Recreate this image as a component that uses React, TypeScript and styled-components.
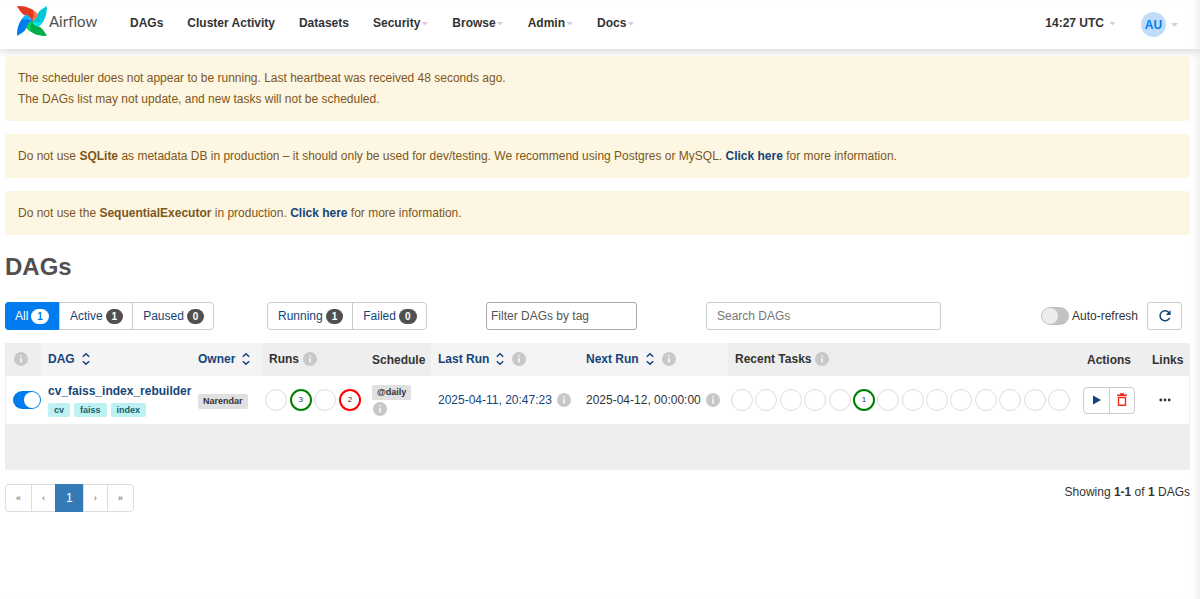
import React from "react";
import styled, { createGlobalStyle, css } from "styled-components";

const GlobalStyle = createGlobalStyle`
  *, *::before, *::after { box-sizing: border-box; }
  body {
    margin: 0;
    background: #fff;
    color: #333;
    font: 12px/18px "Liberation Sans", Arial, Helvetica, sans-serif;
  }
  button, input { font: inherit; }
  a { color: #14457a; text-decoration: none; }
`;

const Page = styled.div`
  min-height: 100vh;
  box-shadow: inset -8px 0 8px -6px rgba(0, 0, 0, 0.08);
`;

/* Navigation */

const NavBar = styled.header`
  display: flex;
  align-items: center;
  height: 49px;
  padding: 0 22px 0 16px;
  box-shadow: 0 1px 10px rgba(0, 0, 0, 0.2);
`;

const Brand = styled.a`
  display: flex;
  align-items: center;
  gap: 1px;
  width: 114px;
  height: 49px;
  padding-bottom: 7px;
  color: #51504f;
  font: 15px/18px Lato, sans-serif;
`;

const NavLinks = styled.nav`
  display: flex;
  flex: 1;
  gap: 24px;
  padding-bottom: 3px;
`;

const NavEnd = styled.div`
  display: flex;
  align-items: center;
  gap: 25px;
`;

const NavItem = styled.a`
  display: flex;
  align-items: center;
  color: #333;
  font-weight: bold;
`;

const MenuButton = styled.button<{ $gap?: number; $raised?: boolean }>`
  display: flex;
  align-items: center;
  gap: ${(p) => p.$gap ?? 1}px;
  padding: 0 0 ${(p) => (p.$raised ? 3 : 0)}px;
  border: 0;
  background: none;
  color: #333;
  font-weight: bold;
`;

const Caret = styled.span`
  width: 7px;
  height: 4px;
  margin-top: 1px;
  background: #dcc6e0;
  clip-path: polygon(0 0, 100% 0, 50% 100%);
`;

const Avatar = styled.span`
  display: grid;
  place-items: center;
  width: 25px;
  height: 25px;
  border-radius: 50%;
  background: #bfddfb;
  color: #017cee;
`;

/* Alerts */

const Main = styled.main`
  padding: 7px 10px 0 5px;
`;

const Alerts = styled.div`
  display: grid;
  gap: 13px;
`;

const Alert = styled.div`
  display: grid;
  gap: 3px;
  padding: 13px;
  border-radius: 3px;
  background: #fdf6e2;
  color: #7c5720;
  p { margin: 0; }
  a { font-weight: bold; }
`;

const Title = styled.h1`
  margin: 17px 0 20px;
  color: #51504f;
  font-size: 24px;
  line-height: 30px;
  font-weight: bold;
`;

/* Filters */

const Filters = styled.div`
  display: grid;
  grid-template-columns: 262fr 219fr 220fr 484fr;
  align-items: center;
  margin-bottom: 13px;
`;

const ButtonGroup = styled.div`
  display: inline-flex;
  justify-self: start;
  border: 1px solid #ccc;
  border-radius: 4px;
  && > * + * { border-left: 1px solid #ccc; }
`;

const FilterLink = styled.a<{ $active?: boolean }>`
  display: flex;
  align-items: center;
  gap: 3px;
  height: 26px;
  padding: 0 9px 0 10px;
  color: #14457a;
  ${(p) =>
    p.$active &&
    css`
      margin: -1px 0 -1px -1px;
      height: 28px;
      padding: 0 10px;
      border-radius: 4px 0 0 4px;
      background: #017cee;
      color: #fff;
    `}
`;

const Count = styled.span<{ $active?: boolean }>`
  padding: 0 6px;
  border-radius: 8px;
  background: ${(p) => (p.$active ? "#fff" : "#51504f")};
  color: ${(p) => (p.$active ? "#017cee" : "#fff")};
  font-size: 10px;
  line-height: 15px;
  font-weight: bold;
`;

const TextInput = styled.input<{ $wide?: boolean }>`
  width: ${(p) => (p.$wide ? 235 : 151)}px;
  height: 28px;
  padding: 0 ${(p) => (p.$wide ? 10 : 4)}px;
  border: 1px solid ${(p) => (p.$wide ? "#ccc" : "#aaa")};
  border-radius: 3px;
  background: #fff;
  &::placeholder {
    color: ${(p) => (p.$wide ? "#777" : "#555")};
    opacity: 1;
  }
`;

const SearchArea = styled.div`
  display: flex;
  align-items: center;
  justify-content: space-between;
  padding-right: 8px;
`;

const RefreshArea = styled.div`
  display: flex;
  align-items: center;
  gap: 9px;
`;

const SwitchLabel = styled.label`
  display: flex;
  align-items: center;
  gap: 3px;
`;

const Switch = styled.input`
  appearance: none;
  display: block;
  width: 28px;
  height: 18px;
  margin: 0;
  padding: 1px;
  border-radius: 9px;
  background: #c4c2c1;
  &::before {
    content: "";
    display: block;
    width: 16px;
    height: 16px;
    border-radius: 50%;
    background: #edecec;
  }
  &:checked { background: #017cee; }
  &:checked::before { margin-left: 10px; background: #fff; }
`;

const IconButton = styled.button<{ $wide?: boolean }>`
  display: grid;
  place-items: center;
  width: ${(p) => (p.$wide ? 35 : 25)}px;
  height: ${(p) => (p.$wide ? 28 : 25)}px;
  padding: 0;
  border: ${(p) => (p.$wide ? "1px solid #ccc" : "0")};
  border-radius: ${(p) => (p.$wide ? 3 : 0)}px;
  background: none;
`;

/* Table */

const TableWrap = styled.div`
  padding-bottom: 46px;
  border-radius: 3px 3px 0 0;
  background: #eee;
`;

const Table = styled.table`
  width: 100%;
  table-layout: fixed;
  border-collapse: separate;
  border-spacing: 0;
`;

const Th = styled.th<{ $sort?: boolean }>`
  height: 33px;
  padding: 0 0 0 7px;
  background: ${(p) => (p.$sort ? "#f4f4f4" : "#eee")};
  text-align: left;
  font-weight: bold;
  white-space: nowrap;
  &:first-child { padding-left: 9px; }
`;

const HeadLabel = styled.span`
  display: flex;
  align-items: center;
  gap: 4px;
  padding-bottom: 2px;
`;

const SortLink = styled.a`
  display: flex;
  align-items: center;
  gap: 6px;
  margin-right: 3px;
`;

const Td = styled.td<{ $tight?: boolean }>`
  height: 48px;
  padding: 0 0 0 ${(p) => (p.$tight ? 3 : 7)}px;
  background: #fff;
  white-space: nowrap;
  &:first-child { border-left: 1px solid #eee; }
  &:last-child { border-right: 1px solid #eee; }
`;

const DagLink = styled.a`
  display: block;
  line-height: 15px;
  font-weight: bold;
`;

const Tags = styled.div`
  display: flex;
  gap: 4px;
  margin-top: 4px;
`;

const Tag = styled.a`
  padding: 0 6px;
  border-radius: 2px;
  background: #bdf1f2;
  color: #1b5f66;
  font-size: 9px;
  line-height: 14px;
  font-weight: bold;
`;

const Label = styled.span`
  display: inline-block;
  padding: 0 5px;
  border-radius: 2px;
  background: #e0e0e0;
  color: #333;
  font-size: 9px;
  line-height: 15px;
  font-weight: bold;
`;

const ScheduleCell = styled.div`
  display: grid;
  justify-items: start;
  gap: 2px;
`;

const ScheduleInfo = styled.span`
  padding-left: 1px;
  line-height: 0;
`;

const Circles = styled.div<{ $end: number }>`
  display: flex;
  justify-content: space-between;
  padding-right: ${(p) => p.$end}px;
`;

const Circle = styled.span<{ $color?: string }>`
  display: grid;
  place-items: center;
  width: 22px;
  height: 22px;
  border: ${(p) => (p.$color ? `2px solid ${p.$color}` : "1px solid #ddd")};
  border-radius: 50%;
  font-size: 8px;
  line-height: 10px;
`;

const WithInfo = styled.span`
  display: flex;
  align-items: center;
  gap: 5px;
`;

/* Footer */

const Footer = styled.div`
  display: flex;
  justify-content: space-between;
  align-items: flex-start;
  margin-top: 14px;
`;

const Pager = styled.nav`
  display: flex;
  border: 1px solid #ddd;
  border-radius: 4px;
`;

const PageLink = styled.a<{ $active?: boolean }>`
  display: grid;
  place-items: center;
  min-width: 24px;
  height: 26px;
  padding: 0 10px;
  color: #555;
  font-size: 9px;
  & + & { border-left: 1px solid #ddd; }
  ${(p) =>
    p.$active &&
    css`
      && {
        height: 28px;
        margin: -1px 0;
        border-color: #337ab7;
        background: #337ab7;
        color: #fff;
        font-size: 12px;
      }
    `}
`;

const Summary = styled.div`
  line-height: 17px;
`;

/* Drawings */

const blades = [
  { turn: 0, main: "#e43921", fold: "#ff7557" },
  { turn: 90, main: "#00c7d4", fold: "#11e1ee" },
  { turn: 180, main: "#00ad46", fold: "#04d659" },
  { turn: 270, main: "#017cee", fold: "#0cb6ff" },
];

const Pinwheel = () => (
  <svg width="32" height="32" viewBox="-16 -16 32 32" aria-hidden="true">
    {blades.map((b) => (
      <g key={b.turn} transform={`rotate(${b.turn})`}>
        <path d="M-15 -14.800C-7 -15.500 1 -12.500 5.800 -6.500L0 0C-1.500 -3 -3.500 -5.500 -7 -5.800C-10 -6.500 -12.500 -11 -15 -14.800Z" fill={b.main} />
        <path d="M0 0C2 -4 2.200 -7.500 0.800 -10.800C3 -9.800 5 -8 6.500 -5.800C6.500 -4 3.500 -2 0 0Z" fill={b.fold} />
      </g>
    ))}
    <circle r="0.800" fill="#51504f" />
  </svg>
);

const Info = () => (
  <svg width="14" height="14" viewBox="0 0 14 14" role="img" aria-label="Info">
    <circle cx="7" cy="7" r="7" fill="#c8c8c8" />
    <path d="M6.300 3.300h1.400v1.400H6.300zM6.300 6h1.400v4.500H6.300z" fill="#fff" />
  </svg>
);

const SortIcon = () => (
  <svg width="10" height="14" viewBox="0 0 10 14" fill="none" stroke="#14457a" strokeWidth="1.500" aria-hidden="true">
    <path d="M1.800 4.800L5 1.700L8.200 4.800M1.800 9.200L5 12.300L8.200 9.200" />
  </svg>
);

const RefreshIcon = () => (
  <svg width="14" height="14" viewBox="0 0 14 14" aria-hidden="true">
    <path d="M11.200 4A5 5 0 1 0 11.700 8.700" fill="none" stroke="#14457a" strokeWidth="1.500" />
    <path d="M12.600 1.200V6H7.800Z" fill="#14457a" />
  </svg>
);

const PlayIcon = () => (
  <svg width="10" height="10" viewBox="0 0 10 10" aria-hidden="true">
    <path d="M1 0.500V9.500L9 5Z" fill="#14457a" />
  </svg>
);

const TrashIcon = () => (
  <svg width="12" height="14" viewBox="0 0 12 14" fill="none" stroke="#ee2b1c" strokeWidth="1.400" aria-hidden="true">
    <path d="M1 2.200H11M4 1H8M2.500 4.500H9.500V12.300H2.500Z" />
  </svg>
);

const DotsIcon = () => (
  <svg width="12" height="4" viewBox="0 0 12 4" fill="#333" aria-hidden="true">
    <circle cx="1.800" cy="2" r="1.400" />
    <circle cx="6" cy="2" r="1.400" />
    <circle cx="10.200" cy="2" r="1.400" />
  </svg>
);

/* Page */

type State = { value?: number; color?: string };

const runs: State[] = [{}, { value: 3, color: "green" }, {}, { value: 2, color: "red" }];

const tasks: State[] = Array.from({ length: 14 }, (_, i) =>
  i === 5 ? { value: 1, color: "green" } : {}
);

const StateCircles = ({ items, end }: { items: State[]; end: number }) => (
  <Circles $end={end}>
    {items.map((item, i) => (
      <Circle key={i} $color={item.color}>
        {item.value}
      </Circle>
    ))}
  </Circles>
);

const Sortable = ({ text, info }: { text: string; info?: boolean }) => (
  <Th $sort>
    <HeadLabel>
      <SortLink href="#">
        {text}
        <SortIcon />
      </SortLink>
      {info && <Info />}
    </HeadLabel>
  </Th>
);

const Filter = ({ text, count, active }: { text: string; count: number; active?: boolean }) => (
  <FilterLink href="#" $active={active}>
    {text}
    <Count $active={active}>{count}</Count>
  </FilterLink>
);

export default function App() {
  return (
    <Page>
      <GlobalStyle />
      <NavBar>
        <Brand href="#">
          <Pinwheel />
          Airflow
        </Brand>
        <NavLinks>
          {["DAGs", "Cluster Activity", "Datasets"].map((t) => (
            <NavItem key={t} href="#">
              {t}
            </NavItem>
          ))}
          {["Security", "Browse", "Admin", "Docs"].map((t) => (
            <MenuButton key={t}>
              {t}
              <Caret />
            </MenuButton>
          ))}
        </NavLinks>
        <NavEnd>
          <MenuButton $gap={5} $raised>
            14:27 UTC
            <Caret />
          </MenuButton>
          <MenuButton $gap={5}>
            <Avatar>AU</Avatar>
            <Caret />
          </MenuButton>
        </NavEnd>
      </NavBar>
      <Main>
        <Alerts>
          <Alert>
            <p>The scheduler does not appear to be running. Last heartbeat was received 48 seconds ago.</p>
            <p>The DAGs list may not update, and new tasks will not be scheduled.</p>
          </Alert>
          <Alert>
            <p>
              Do not use <b>SQLite</b> as metadata DB in production – it should only be used for dev/testing. We
              recommend using Postgres or MySQL. <a href="#">Click here</a> for more information.
            </p>
          </Alert>
          <Alert>
            <p>
              Do not use the <b>SequentialExecutor</b> in production. <a href="#">Click here</a> for more
              information.
            </p>
          </Alert>
        </Alerts>
        <Title>DAGs</Title>
        <Filters>
          <ButtonGroup>
            <Filter text="All" count={1} active />
            <Filter text="Active" count={1} />
            <Filter text="Paused" count={0} />
          </ButtonGroup>
          <ButtonGroup>
            <Filter text="Running" count={1} />
            <Filter text="Failed" count={0} />
          </ButtonGroup>
          <TextInput aria-label="Filter DAGs by tag" placeholder="Filter DAGs by tag" />
          <SearchArea>
            <TextInput $wide type="search" aria-label="Search DAGs" placeholder="Search DAGs" />
            <RefreshArea>
              <SwitchLabel>
                <Switch type="checkbox" role="switch" />
                Auto-refresh
              </SwitchLabel>
              <IconButton $wide aria-label="Refresh">
                <RefreshIcon />
              </IconButton>
            </RefreshArea>
          </SearchArea>
        </Filters>
        <TableWrap>
          <Table>
            <colgroup>
              <col style={{ width: 36 }} />
              <col style={{ width: 150 }} />
              <col style={{ width: 71 }} />
              <col style={{ width: 103 }} />
              <col style={{ width: 66 }} />
              <col style={{ width: 148 }} />
              <col style={{ width: 149 }} />
              <col />
              <col style={{ width: 65 }} />
              <col style={{ width: 45 }} />
            </colgroup>
            <thead>
              <tr>
                <Th>
                  <HeadLabel>
                    <Info />
                  </HeadLabel>
                </Th>
                <Sortable text="DAG" />
                <Sortable text="Owner" />
                <Th>
                  <HeadLabel>
                    Runs <Info />
                  </HeadLabel>
                </Th>
                <Th>Schedule</Th>
                <Sortable text="Last Run" info />
                <Sortable text="Next Run" info />
                <Th>
                  <HeadLabel>
                    Recent Tasks <Info />
                  </HeadLabel>
                </Th>
                <Th>Actions</Th>
                <Th>Links</Th>
              </tr>
            </thead>
            <tbody>
              <tr>
                <Td>
                  <Switch type="checkbox" role="switch" defaultChecked aria-label="Pause/Unpause DAG" />
                </Td>
                <Td>
                  <DagLink href="#">cv_faiss_index_rebuilder</DagLink>
                  <Tags>
                    <Tag href="#">cv</Tag>
                    <Tag href="#">faiss</Tag>
                    <Tag href="#">index</Tag>
                  </Tags>
                </Td>
                <Td>
                  <Label>Narendar</Label>
                </Td>
                <Td $tight>
                  <StateCircles items={runs} end={4} />
                </Td>
                <Td>
                  <ScheduleCell>
                    <Label>@daily</Label>
                    <ScheduleInfo>
                      <Info />
                    </ScheduleInfo>
                  </ScheduleCell>
                </Td>
                <Td>
                  <WithInfo>
                    <a href="#">2025-04-11, 20:47:23</a>
                    <Info />
                  </WithInfo>
                </Td>
                <Td>
                  <WithInfo>
                    2025-04-12, 00:00:00
                    <Info />
                  </WithInfo>
                </Td>
                <Td $tight>
                  <StateCircles items={tasks} end={10} />
                </Td>
                <Td $tight>
                  <ButtonGroup>
                    <IconButton aria-label="Trigger DAG">
                      <PlayIcon />
                    </IconButton>
                    <IconButton aria-label="Delete DAG">
                      <TrashIcon />
                    </IconButton>
                  </ButtonGroup>
                </Td>
                <Td>
                  <IconButton aria-label="Links">
                    <DotsIcon />
                  </IconButton>
                </Td>
              </tr>
            </tbody>
          </Table>
        </TableWrap>
        <Footer>
          <Pager aria-label="Pagination">
            <PageLink href="#">«</PageLink>
            <PageLink href="#">‹</PageLink>
            <PageLink href="#" $active>
              1
            </PageLink>
            <PageLink href="#">›</PageLink>
            <PageLink href="#">»</PageLink>
          </Pager>
          <Summary>
            Showing <b>1-1</b> of <b>1</b> DAGs
          </Summary>
        </Footer>
      </Main>
    </Page>
  );
}
